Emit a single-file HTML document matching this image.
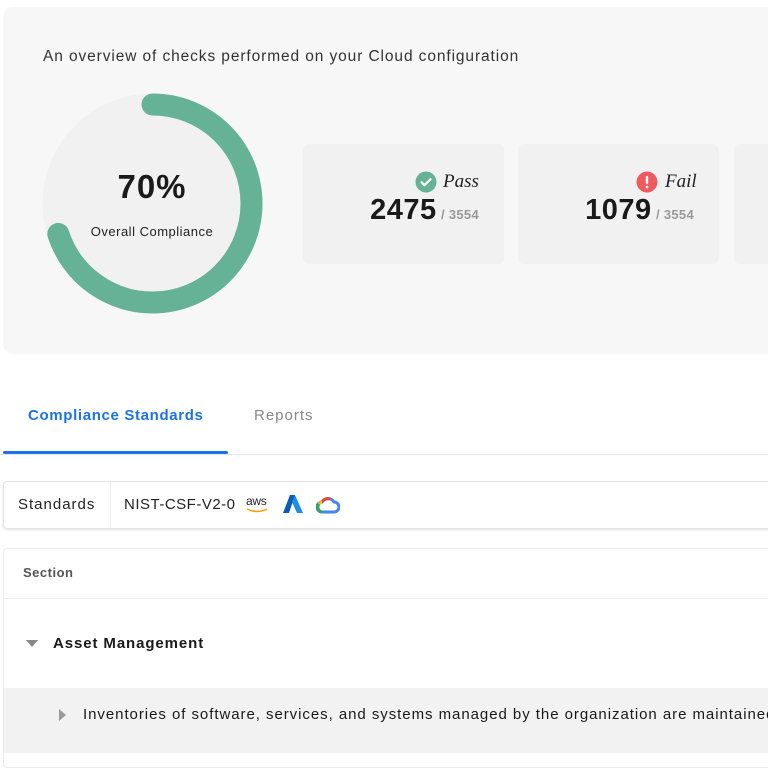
<!DOCTYPE html>
<html><head><style>
*{margin:0;padding:0;box-sizing:border-box}
body{width:768px;height:753px;overflow:hidden;background:#fff;font-family:"Liberation Sans",sans-serif;color:#222;position:relative}
.abs{position:absolute}
.panel{left:3px;top:7px;width:780px;height:347px;background:#f7f7f7;border-radius:10px}
.card{top:144px;width:201px;height:120px;background:#f1f1f1;border-radius:6px}
.lbl{font-family:"Liberation Serif",serif;font-style:italic;font-size:19px;color:#222}
.big{font-weight:bold;font-size:29px;color:#1a1a1a;letter-spacing:0.5px}
.sm{font-weight:bold;font-size:13px;color:#999;letter-spacing:0.3px}
</style></head><body>
<div class="abs panel"></div>
<div class="abs" style="left:43px;top:48px;font-size:15.5px;color:#333;letter-spacing:0.9px">An overview of checks performed on your Cloud configuration</div>
<svg class="abs" style="left:30px;top:81px" width="245" height="245">
<circle cx="122.5" cy="122.5" r="110" fill="#f1f1f1"/>
<circle cx="122.5" cy="122.5" r="99" fill="none" stroke="#66b297" stroke-width="22" stroke-linecap="round" stroke-dasharray="435.4 622" transform="rotate(-90 122.5 122.5)"/>
</svg>
<div class="abs" style="left:52px;top:168px;width:200px;text-align:center;font-weight:bold;font-size:33px;color:#1a1a1a;letter-spacing:1px">70%</div>
<div class="abs" style="left:52px;top:224px;width:200px;text-align:center;font-size:13px;color:#222;letter-spacing:0.5px">Overall Compliance</div>

<div class="abs card" style="left:303px"></div>
<div class="abs card" style="left:518px"></div>
<div class="abs card" style="left:734px"></div>
<svg class="abs" style="left:415px;top:171px" width="22" height="22"><circle cx="11" cy="11" r="10.5" fill="#66b297"/><path d="M6.5 11.2l3 3 6-6" stroke="#fff" stroke-width="2.2" fill="none" stroke-linecap="round" stroke-linejoin="round"/></svg>
<div class="abs lbl" style="left:443px;top:171px">Pass</div>
<div class="abs" style="left:303px;top:194px;width:176px;text-align:right"><span class="big">2475</span> <span class="sm">/ 3554</span></div>
<svg class="abs" style="left:636px;top:171px" width="22" height="22"><circle cx="11" cy="11" r="10.5" fill="#ee5a5f"/><rect x="9.8" y="5" width="2.4" height="8" rx="1.2" fill="#fff"/><circle cx="11" cy="16" r="1.4" fill="#fff"/></svg>
<div class="abs lbl" style="left:665px;top:171px">Fail</div>
<div class="abs" style="left:518px;top:194px;width:176px;text-align:right"><span class="big">1079</span> <span class="sm">/ 3554</span></div>

<div class="abs" style="left:28px;top:407px;font-size:15px;font-weight:bold;color:#1a73e8;letter-spacing:0.65px">Compliance Standards</div>
<div class="abs" style="left:254px;top:407px;font-size:15px;color:#888;letter-spacing:1px">Reports</div>
<div class="abs" style="left:0;top:454px;width:768px;height:1px;background:#e8e8e8"></div>
<div class="abs" style="left:3px;top:451px;width:225px;height:3px;background:#1a73e8;border-radius:2px"></div>

<div class="abs" style="left:3px;top:481px;width:780px;height:48px;border:1px solid #e4e4e4;border-radius:4px;box-shadow:0 1px 2px rgba(0,0,0,.12)"></div>
<div class="abs" style="left:110px;top:482px;width:1px;height:46px;background:#eee"></div>
<div class="abs" style="left:18px;top:496px;font-size:15px;color:#222;letter-spacing:1px">Standards</div>
<div class="abs" style="left:124px;top:496px;font-size:15px;color:#222;letter-spacing:0.5px">NIST-CSF-V2-0</div>
<div class="abs" style="left:246px;top:494px;font-size:12px;color:#222;letter-spacing:-.3px">aws</div>
<svg class="abs" style="left:246px;top:508px" width="24" height="6"><path d="M1 1q10 5 20 0" stroke="#f90" stroke-width="1.5" fill="none"/></svg>
<svg class="abs" style="left:283px;top:495px" width="20" height="18"><path d="M7 0h5l-6 18H0z" fill="#0a5cb8"/><path d="M12 0l8 18h-6l-5-11z" fill="#1a8ee8"/></svg>
<svg class="abs" style="left:316px;top:496px" width="24" height="18"><path d="M6 16a5 5 0 0 1 0-10 7 7 0 0 1 12 0 5 5 0 0 1 0 10z" fill="none" stroke="#4285f4" stroke-width="3"/><path d="M6 16a5 5 0 0 1-3-8" fill="none" stroke="#34a853" stroke-width="3"/><path d="M6 6a7 7 0 0 1 8-3" fill="none" stroke="#ea4335" stroke-width="3"/><path d="M3 8a5 5 0 0 1 3-2" fill="none" stroke="#fbbc05" stroke-width="3"/></svg>

<div class="abs" style="left:3px;top:548px;width:780px;height:220px;border:1px solid #ececec;border-radius:4px"></div>
<div class="abs" style="left:4px;top:598px;width:770px;height:1px;background:#eee"></div>
<div class="abs" style="left:23px;top:565px;font-size:13px;font-weight:bold;color:#555;letter-spacing:0.5px">Section</div>
<svg class="abs" style="left:26px;top:640px" width="12" height="8"><path d="M0 0h12L6 7z" fill="#888"/></svg>
<div class="abs" style="left:53px;top:635px;font-size:15px;font-weight:bold;color:#1a1a1a;letter-spacing:0.9px">Asset Management</div>
<div class="abs" style="left:4px;top:688px;width:770px;height:65px;background:#f2f2f2"></div>
<svg class="abs" style="left:59px;top:709px" width="8" height="12"><path d="M0 0v12l7-6z" fill="#999"/></svg>
<div class="abs" style="left:83px;top:706px;font-size:15px;color:#1a1a1a;white-space:nowrap;letter-spacing:0.95px">Inventories of software, services, and systems managed by the organization are maintained</div>
</body></html>
